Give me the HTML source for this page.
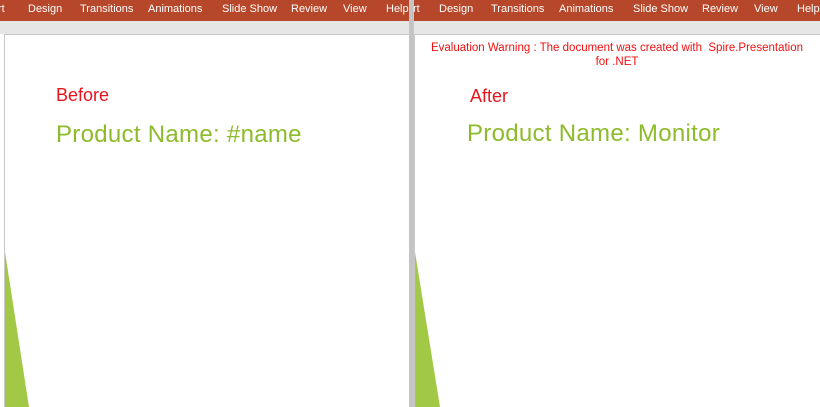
<!DOCTYPE html>
<html><head><style>
body{margin:0;width:820px;height:407px;position:relative;overflow:hidden;background:#fff;font-family:"Liberation Sans",sans-serif}
.bar{position:absolute;top:0;height:21px;background:#b7472a}
.m{position:absolute;top:3px;color:#fff;font-size:11px;white-space:nowrap}
.gray{position:absolute;top:21px;height:13px;background:#e6e6e6}
.slide{position:absolute;top:34px;bottom:0;background:#fff;border-left:1px solid #c8c8c8;border-top:1px solid #c8c8c8}
.t{position:absolute;white-space:nowrap}
</style></head><body>
<div class="bar" style="left:0;width:409px"></div>
<div class="bar" style="left:414px;width:406px"></div>
<div class="gray" style="left:0;width:409px"></div>
<div class="gray" style="left:414px;width:406px"></div>
<div style="position:absolute;left:409px;top:0;width:5px;height:407px;background:#c4c4c4"></div>
<div class="slide" style="left:4px;width:404px"></div>
<div class="slide" style="left:414px;width:406px"></div>
<div class="m" style="left:-2px">rt</div><div class="m" style="left:28px">Design</div><div class="m" style="left:80px">Transitions</div><div class="m" style="left:148px">Animations</div><div class="m" style="left:222px">Slide Show</div><div class="m" style="left:291px">Review</div><div class="m" style="left:343px">View</div><div class="m" style="left:386px">Help</div>
<div class="m" style="left:413px">rt</div><div class="m" style="left:439px">Design</div><div class="m" style="left:491px">Transitions</div><div class="m" style="left:559px">Animations</div><div class="m" style="left:633px">Slide Show</div><div class="m" style="left:702px">Review</div><div class="m" style="left:754px">View</div><div class="m" style="left:797px">Help</div>
<svg style="position:absolute;left:0;top:0" width="820" height="407">
<polygon points="5,252 5,407 29,407" fill="#a2c946"/>
<polygon points="415,252 415,407 440,407" fill="#a2c946"/>
</svg>
<div class="t" style="left:56px;top:85px;font-size:18px;color:#e8141c">Before</div>
<div class="t" style="left:56px;top:121px;font-size:24px;letter-spacing:0.3px;color:#8dbb2b">Product Name: #name</div>
<div class="t" style="left:414px;width:406px;top:41px;text-align:center;font-size:11.5px;line-height:14px;color:#f01010;white-space:normal">Evaluation Warning : The document was created with&nbsp; Spire.Presentation<br>for .NET</div>
<div class="t" style="left:470px;top:86px;font-size:18px;color:#e8141c">After</div>
<div class="t" style="left:467px;top:120px;font-size:24px;letter-spacing:0.3px;color:#8dbb2b">Product Name: Monitor</div>
</body></html>
